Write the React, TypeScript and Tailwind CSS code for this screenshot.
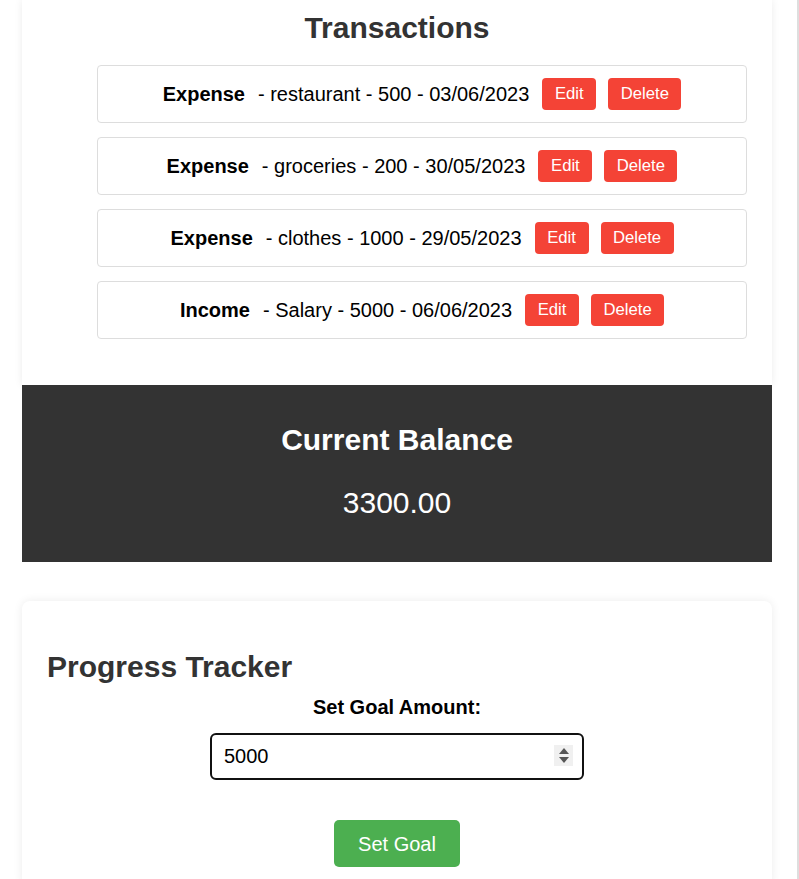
import React from 'react'

type Transaction = {
  type: 'Expense' | 'Income'
  description: string
  amount: number
  date: string
}

const transactions: Transaction[] = [
  { type: 'Expense', description: 'restaurant', amount: 500, date: '03/06/2023' },
  { type: 'Expense', description: 'groceries', amount: 200, date: '30/05/2023' },
  { type: 'Expense', description: 'clothes', amount: 1000, date: '29/05/2023' },
  { type: 'Income', description: 'Salary', amount: 5000, date: '06/06/2023' },
]

function TransactionRow({ tx }: { tx: Transaction }) {
  return (
    <li className="flex h-[58px] w-[650px] items-center justify-center rounded-[4px] border border-[#dddddd] text-[20px] text-black">
      <strong className="mr-[13px] font-bold">{tx.type}</strong>
      <span>
        {' '}- {tx.description} - {tx.amount} - {tx.date}
      </span>
      <button className="ml-[13px] flex h-[32px] w-[54px] items-center justify-center rounded-[4px] bg-[#f44336] text-[16.7px] text-white">
        Edit
      </button>
      <button className="ml-[12px] flex h-[32px] w-[73px] items-center justify-center rounded-[4px] bg-[#f44336] text-[16.7px] text-white">
        Delete
      </button>
    </li>
  )
}

function Spinner() {
  return (
    <div className="absolute right-[11px] top-[12px] flex h-[21px] w-[19px] flex-col items-center justify-center gap-[3px] bg-[#f0f0f0]">
      <svg width="10" height="6" viewBox="0 0 10 6">
        <path d="M5 0 L10 6 L0 6 Z" fill="#555555" />
      </svg>
      <svg width="10" height="6" viewBox="0 0 10 6">
        <path d="M0 0 L10 0 L5 6 Z" fill="#555555" />
      </svg>
    </div>
  )
}

export default function App() {
  const balance = transactions.reduce(
    (sum, t) => (t.type === 'Income' ? sum + t.amount : sum - t.amount),
    0,
  )

  return (
    <div className="flex min-h-screen bg-white font-['Liberation_Sans',Arial,sans-serif]">
      <div className="flex-1">
        <div className="ml-[22px] w-[750px]">
          <section className="bg-white pb-[46px] pt-[11px] shadow-[0_0_8px_rgba(0,0,0,0.08)]">
            <h2 className="text-center text-[30px] font-bold leading-[34px] text-[#333333]">
              Transactions
            </h2>
            <ul className="mt-[20px] flex flex-col items-start gap-[14px] pl-[75px]">
              {transactions.map((tx, i) => (
                <TransactionRow key={i} tx={tx} />
              ))}
            </ul>
          </section>

          <section className="flex flex-col items-center bg-[#333333] pb-[42px] pt-[38px] text-white">
            <h3 className="text-[30px] font-bold leading-[34px]">Current Balance</h3>
            <p className="mt-[29px] text-[30px] leading-[34px]">{balance.toFixed(2)}</p>
          </section>

          <section className="mt-[39px] rounded-[8px] bg-white pb-[20px] pl-[25px] pr-[25px] pt-[49px] shadow-[0_0_10px_rgba(0,0,0,0.08)]">
            <h2 className="text-[30px] font-bold leading-[34px] text-[#333333]">
              Progress Tracker
            </h2>
            <div className="mt-[12px] flex flex-col items-center">
              <label className="text-[20px] font-bold leading-[23px] text-black">
                Set Goal Amount:
              </label>
              <div className="relative mt-[14px] h-[47px] w-[374px]">
                <input
                  type="text"
                  defaultValue="5000"
                  className="h-full w-full rounded-[6px] border-2 border-[#111111] pl-[12px] text-[20px] text-black outline-none"
                />
                <Spinner />
              </div>
              <button className="mt-[40px] h-[47px] w-[126px] rounded-[5px] bg-[#4caf50] text-[20px] text-white">
                Set Goal
              </button>
            </div>
          </section>
        </div>
      </div>
      <div className="w-[2px] bg-[#dedede]" />
    </div>
  )
}
